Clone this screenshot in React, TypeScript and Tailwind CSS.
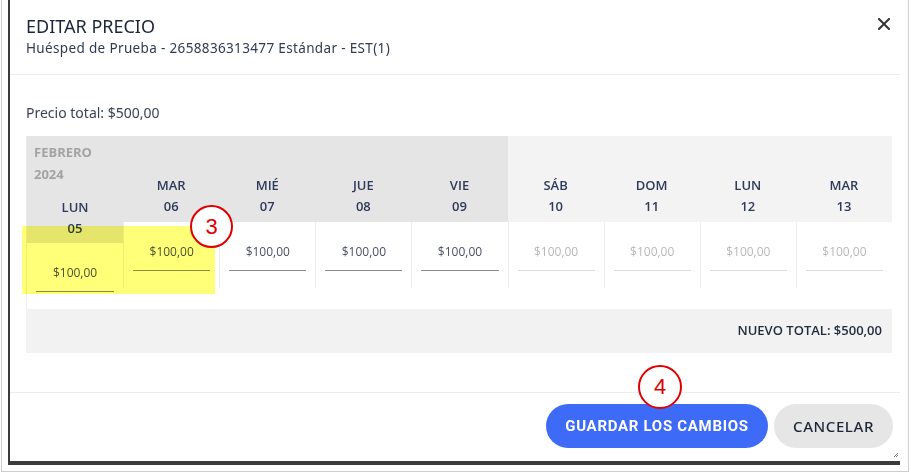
import React from 'react';

const days = [
  { name: 'LUN', num: '05', active: true, first: true },
  { name: 'MAR', num: '06', active: true },
  { name: 'MIÉ', num: '07', active: true },
  { name: 'JUE', num: '08', active: true },
  { name: 'VIE', num: '09', active: true },
  { name: 'SÁB', num: '10', active: false },
  { name: 'DOM', num: '11', active: false },
  { name: 'LUN', num: '12', active: false },
  { name: 'MAR', num: '13', active: false },
];

const poppins = { fontFamily: '"Noto Sans", "Open Sans", sans-serif' };
const openSans = { fontFamily: '"Open Sans", "Noto Sans", sans-serif' };

function PriceCell({ active, first }: { active: boolean; first?: boolean }) {
  return (
    <div className={first ? 'h-[66px] bg-white pt-[21px]' : 'h-[66px] border-l border-[#ececec] bg-white pt-[21px]'}>
      <div
        className={
          active
            ? 'mx-[9px] border-b border-[#8a8a8a] pb-[9px] text-center text-[12px] leading-[18px] text-[#4a5163]'
            : 'mx-[9px] border-b border-[#dcdcdc] pb-[9px] text-center text-[12px] leading-[18px] text-[#b8b8b8]'
        }
      >
        $100,00
      </div>
    </div>
  );
}

function DayColumn({ day }: { day: (typeof days)[number] }) {
  const bg = day.active ? 'bg-[#e5e5e5]' : 'bg-[#f3f3f3]';
  return (
    <div className="flex flex-1 flex-col">
      {day.first ? (
        <div className={`flex h-[107px] flex-col ${bg}`}>
          <div className="pl-[7px] pt-[5px] text-[13px] font-bold leading-[22px] text-[#a3a3a3]">
            <div>FEBRERO</div>
            <div>2024</div>
          </div>
          <div className="mt-auto pb-[4px] text-center text-[13px] font-semibold leading-[21px] text-[#2e3a59]">
            <div>{day.name}</div>
            <div>{day.num}</div>
          </div>
        </div>
      ) : (
        <div className={`flex h-[86px] flex-col justify-end pb-[5px] text-center text-[13px] font-semibold leading-[21px] text-[#2e3a59] ${bg}`}>
          <div>{day.name}</div>
          <div>{day.num}</div>
        </div>
      )}
      <PriceCell active={day.active} first={day.first} />
    </div>
  );
}

function Marker({ n, className }: { n: string; className: string }) {
  return (
    <div
      className={`absolute flex items-center justify-center rounded-full border-2 border-[#e00000] bg-white text-[22px] leading-none text-[#e00000] ${className}`}
      style={{ fontFamily: '"Liberation Sans", Arial, sans-serif' }}
    >
      {n}
    </div>
  );
}

export default function App() {
  return (
    <div className="relative h-[474px] w-[911px] overflow-hidden bg-white">
      <div className="ml-[1px] h-[472px] w-[908px] border-x border-b border-[#cdcdcd] pl-[6px] pr-[7px] pb-[6px]">
        <div className="flex h-[465px] w-[892px] flex-col border-b-4 border-l-2 border-[#3b3b3b] bg-white">
          {/* header */}
          <div className="relative h-[75px] border-b border-[#ececec] pl-[16px] pt-[14px]" style={poppins}>
            <div className="text-[18px] leading-[25px] text-[#1c2638]">EDITAR PRECIO</div>
            <div className="text-[13.5px] leading-[18px] tracking-[0.35px] text-[#2f3b50]">
              Huésped de Prueba - 2658836313477 Estándar - EST(1)
            </div>
            <button className="absolute right-[8px] top-[16px] p-[2px]">
              <svg width="12" height="12" viewBox="0 0 12 12">
                <path d="M1 1L11 11M11 1L1 11" stroke="#333" strokeWidth="2" strokeLinecap="square" />
              </svg>
            </button>
          </div>

          {/* body */}
          <div className="h-[317px] px-[16px] pt-[28px]">
            <div className="text-[14px] leading-[20px] text-[#3a4355]" style={poppins}>
              Precio total: $500,00
            </div>
            <div className="mt-[13px] w-[866px]" style={openSans}>
              <div className="flex items-start border-l border-[#ececec]">
                {days.map((d, i) => (
                  <DayColumn key={i} day={d} />
                ))}
              </div>
              <div className="flex h-[44px] items-center justify-end bg-[#f2f2f2] pr-[10px] text-[13px] font-semibold text-[#1f2a3c]">
                NUEVO TOTAL: $500,00
              </div>
            </div>
          </div>

          {/* footer */}
          <div className="relative flex flex-1 items-start justify-end gap-[6px] border-t border-[#ececec] pr-[7px] pt-[11px]">
            <button
              className="h-[44px] w-[222px] rounded-full bg-[#3d6bf8] text-[15px] font-bold tracking-[0.7px] text-white"
              style={{ fontFamily: 'Roboto, "Liberation Sans", sans-serif' }}
            >
              GUARDAR LOS CAMBIOS
            </button>
            <button
              className="h-[44px] w-[119px] rounded-full bg-[#e6e6e6] text-[15px] font-medium tracking-[0.6px] text-[#1c2638]"
              style={poppins}
            >
              CANCELAR
            </button>
            <svg className="absolute bottom-[3px] right-[1px]" width="6" height="6" viewBox="0 0 6 6">
              <path d="M5 1L1 5M5 3L3 5" stroke="#777" strokeWidth="1" />
            </svg>
          </div>
        </div>
      </div>

      {/* annotations */}
      <div className="pointer-events-none absolute left-[22px] top-[226px] h-[68px] w-[193px] bg-[#ffff78] mix-blend-multiply" />
      <Marker n="3" className="left-[190px] top-[205px] h-[43px] w-[43px]" />
      <Marker n="4" className="left-[638px] top-[365px] h-[44px] w-[44px]" />
    </div>
  );
}
